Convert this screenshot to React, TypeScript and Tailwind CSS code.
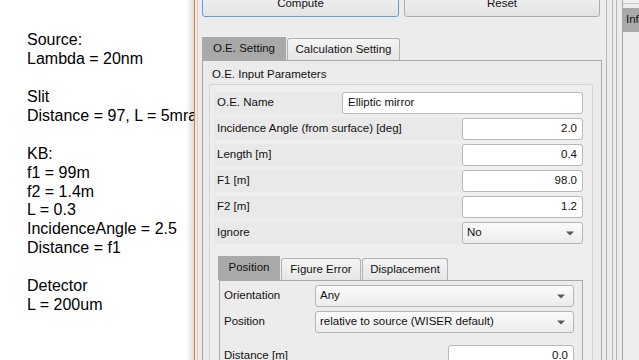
import { ReactNode } from 'react'

const notes = [
  'Source:',
  'Lambda = 20nm',
  '',
  'Slit',
  'Distance = 97, L = 5mrad',
  '',
  'KB:',
  'f1 = 99m',
  'f2 = 1.4m',
  'L = 0.3',
  'IncidenceAngle = 2.5',
  'Distance = f1',
  '',
  'Detector',
  'L = 200um',
]

const params = [
  { label: 'Incidence Angle (from surface) [deg]', value: '2.0' },
  { label: 'Length [m]', value: '0.4' },
  { label: 'F1 [m]', value: '98.0' },
  { label: 'F2 [m]', value: '1.2' },
]

function Arrow() {
  return (
    <svg width={8} height={5} viewBox="0 0 8 5" className="shrink-0">
      <path d="M0 0.5h8L4 4.5z" fill="#5a5a5a" />
    </svg>
  )
}

function Field({ value, className = '', align = 'right' }: { value: string; className?: string; align?: 'left' | 'right' }) {
  return (
    <div
      className={`flex h-[22px] items-center rounded-[3px] border border-[#b9b9b9] bg-white px-[5px] ${
        align === 'right' ? 'justify-end' : 'justify-start'
      } ${className}`}
    >
      {value}
    </div>
  )
}

function Combo({ value, className = '' }: { value: string; className?: string }) {
  return (
    <div
      className={`flex h-[22px] items-center justify-between rounded-[3px] border border-[#b4b4b4] bg-[linear-gradient(#fbfbfb,#ececec)] pl-[4px] pr-[8px] ${className}`}
    >
      <span>{value}</span>
      <Arrow />
    </div>
  )
}

function Tab({ children, active, className = '' }: { children: ReactNode; active?: boolean; className?: string }) {
  return active ? (
    <div className={`flex items-center justify-center bg-[#a9a9a9] ${className}`}>{children}</div>
  ) : (
    <div
      className={`flex items-center justify-center rounded-t-[3px] border border-b-0 border-[#b2b2b2] bg-[linear-gradient(#f4f4f4,#e6e6e6)] ${className}`}
    >
      {children}
    </div>
  )
}

function Row({ label, children }: { label: string; children: ReactNode }) {
  return (
    <div className="flex h-[22px] items-center justify-between bg-[#e9e9e9] pl-[3px]">
      <span>{label}</span>
      {children}
    </div>
  )
}

export default function App() {
  return (
    <div className="flex h-[360px] w-[639px] overflow-hidden bg-[#ececec] font-['Liberation_Sans',Arial,sans-serif] text-[11.5px] text-[#111]">
      {/* notes */}
      <div className="w-[194px] shrink-0 overflow-hidden whitespace-nowrap bg-[linear-gradient(to_right,#fff_0,#fff_186px,#dcdcdc_194px)] pl-[27px] pt-[31px] text-[16px] leading-[18.95px] text-black">
        {notes.map((n, i) => (
          <div key={i} className="h-[18.95px]">
            {n}
          </div>
        ))}
      </div>
      <div className="w-px shrink-0 bg-[#f0782c]" />

      {/* control panel */}
      <div className="flex w-[407px] shrink-0">
        <div className="ml-[2px] w-px bg-[#d2d2d2]" />
        <div className="ml-[4px] flex w-[400px] flex-col">
          <div className="-mt-[10px] flex gap-[5px]">
            <div className="flex h-[27px] w-[197px] items-center justify-center rounded-[3px] border border-[#5b9fe0] bg-[linear-gradient(#f3f3f3,#e4e4e4)]">
              Compute
            </div>
            <div className="flex h-[27px] w-[196px] items-center justify-center rounded-[3px] border border-[#adadad] bg-[linear-gradient(#f3f3f3,#e4e4e4)]">
              Reset
            </div>
          </div>

          <div className="mt-[20px] flex items-end">
            <Tab active className="h-[23px] w-[84px]">
              O.E. Setting
            </Tab>
            <Tab className="ml-px h-[22px] w-[113px]">Calculation Setting</Tab>
          </div>

          <div className="flex-1 border border-b-0 border-[#a8a8a8] bg-[#ebebeb]">
            <div className="pl-[9px] pt-[6px] leading-[14px]">O.E. Input Parameters</div>
            <div className="ml-[6px] mr-[8px] mt-[3px] h-[400px] rounded-[2px] border border-[#d4d4d4] bg-[#eeeeee] pl-[4px] pr-[9px] pt-[7px]">
              <div className="flex flex-col gap-[4px]">
                <Row label="O.E. Name">
                  <Field value="Elliptic mirror" align="left" className="w-[241px]" />
                </Row>
                {params.map((p) => (
                  <Row key={p.label} label={p.label}>
                    <Field value={p.value} className="w-[121px]" />
                  </Row>
                ))}
                <Row label="Ignore">
                  <Combo value="No" className="w-[121px]" />
                </Row>
              </div>

              <div className="ml-[4px] mt-[12px] flex items-end">
                <Tab active className="h-[24px] w-[62px]">
                  Position
                </Tab>
                <Tab className="ml-px h-[22px] w-[80px]">Figure Error</Tab>
                <Tab className="ml-px h-[22px] w-[86px]">Displacement</Tab>
              </div>
              <div className="ml-[5px] h-[200px] w-[364px] border border-[#a8a8a8] bg-[#ececec] pl-[4px] pr-[8px] pt-[4px]">
                <div className="flex items-center">
                  <span className="w-[91px]">Orientation</span>
                  <Combo value="Any" className="flex-1" />
                </div>
                <div className="mt-[4px] flex items-center">
                  <span className="w-[91px]">Position</span>
                  <Combo value="relative to source (WISER default)" className="flex-1" />
                </div>
                <div className="mt-[12px] flex items-center justify-between">
                  <span>Distance [m]</span>
                  <Field value="0.0" className="w-[126px]" />
                </div>
              </div>
            </div>
          </div>
        </div>
      </div>

      {/* splitter */}
      <div className="flex w-[20px] shrink-0">
        <div className="ml-[4px] w-px bg-[#b4b4b4]" />
        <div className="ml-[5px] w-px bg-[#b4b4b4]" />
        <div className="ml-[3px] w-px bg-[#b4b4b4]" />
      </div>

      {/* right panel */}
      <div className="flex w-[17px] shrink-0 flex-col border-l border-[#a8a8a8] bg-[#eeeeee]">
        <div className="h-[4px] border-b border-[#c4c4c4] bg-[#f2f2f2]" />
        <div className="mt-[4px] flex h-[24px] items-center overflow-hidden whitespace-nowrap bg-[#a9a9a9] pl-[3px]">
          Info
        </div>
      </div>
    </div>
  )
}
